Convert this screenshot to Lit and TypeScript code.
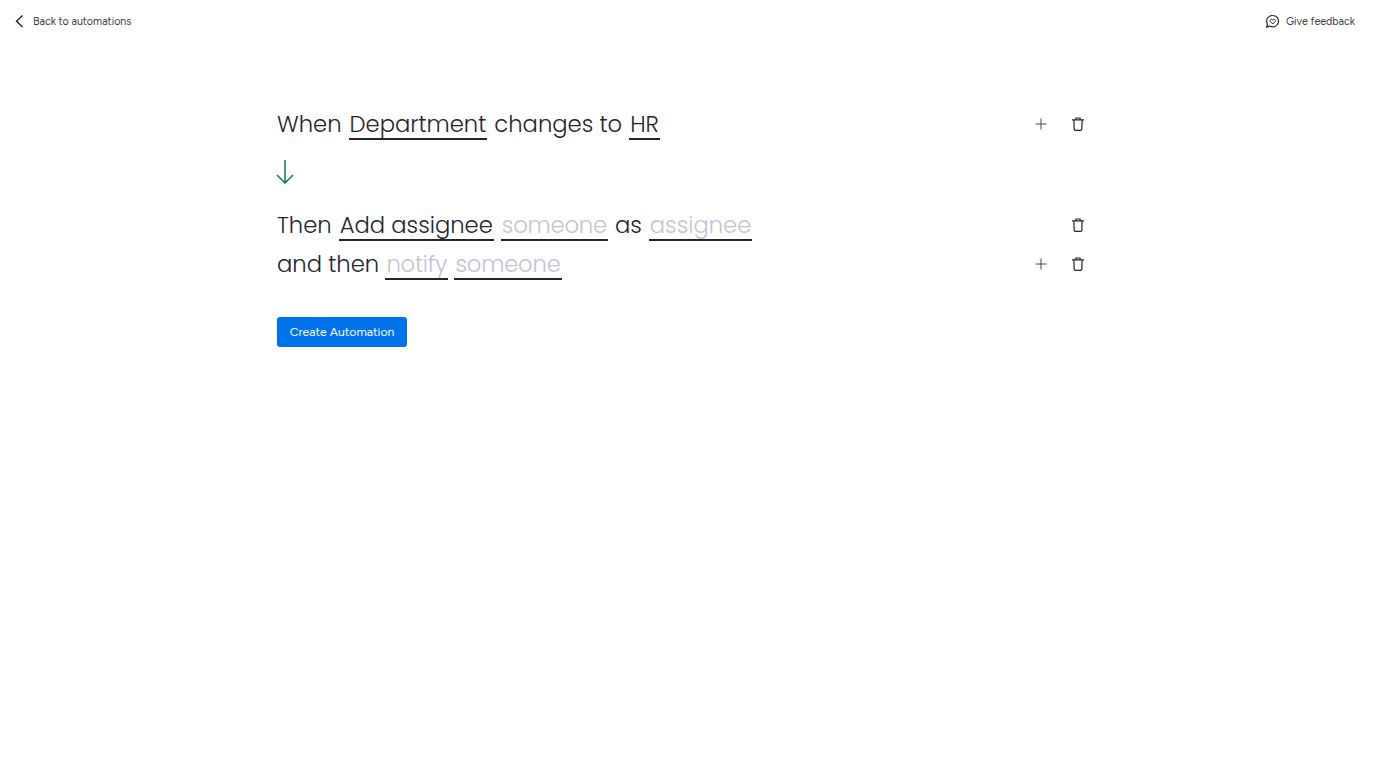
import { LitElement, html, css } from "lit";
import { customElement } from "lit/decorators.js";

const plus = html`<svg class="icon" viewBox="0 0 16 16" width="16" height="16"><path d="M8 2.5v11M2.5 8h11" stroke="#44444f" stroke-width="1" fill="none"/></svg>`;
const trash = html`<svg class="icon" viewBox="0 0 16 16" width="16" height="16"><path d="M2 3.8h12M5.8 3.6V2h4.4v1.6M3.9 4l.3 9.4a1 1 0 0 0 1 .9h5.6a1 1 0 0 0 1-.9l.3-9.4" stroke="#23232b" stroke-width="1.2" fill="none" stroke-linejoin="round"/></svg>`;

@customElement("app-root")
export class AppRoot extends LitElement {
  static styles = css`
    :host { display: block; width: 1380px; height: 768px; background: #fff; font-family: "Figtree", "Lato", "Liberation Sans", sans-serif; color: #24242c; overflow: hidden; }
    .top { display: flex; justify-content: space-between; align-items: center; height: 42px; padding: 0 25px 0 12px; font-size: 10.7px; color: #3b3b44; }
    .link { display: flex; align-items: center; }
    .back { gap: 7px; }
    .fb { gap: 6px; }
    .main { width: 809px; margin: 62px 0 0 277px; font-family: "Poppins", "Inter", sans-serif; font-weight: 300; font-size: 22.7px; }
    .row { display: flex; align-items: center; justify-content: space-between; height: 39px; }
    .sentence { display: flex; gap: 6.3px; white-space: nowrap; line-height: 31px; margin-top: 2px; }
    .sentence.wide { gap: 7px; }
    .tok { border-bottom: 2px solid #24242c; padding: 0 1px; height: 31px; box-sizing: border-box; }
    .muted { color: #c1c4d8; }
    .tight { letter-spacing: -0.2px; }
    .actions { display: flex; gap: 21.5px; justify-content: flex-end; }
    .icon { display: block; }
    .arrow { display: block; margin: 17px 0 21px -2px; }
    .cta { display: block; margin-top: 34px; width: 130px; height: 30px; background: #0073ea; color: #fff; border: 0; border-radius: 3px; font: 400 12.2px "Figtree", "Lato", sans-serif; padding: 0 0 2px; }
  `;
  render() {
    return html`
      <div class="top">
        <div class="link back">
          <svg width="14" height="16" viewBox="0 0 14 16"><path d="M10.5 2.5 4.5 8.2l6 5.8" stroke="#23232b" stroke-width="1.4" fill="none"/></svg>
          <span>Back to automations</span>
        </div>
        <div class="link fb">
          <svg width="15" height="15" viewBox="0 0 15 15" fill="none"><path d="M7.8 1.5a5.7 5.7 0 1 1-2.9 10.6L1.6 13.2l1-2.9A5.7 5.7 0 0 1 7.8 1.5Z" stroke="#23232b" stroke-width="1.2" stroke-linejoin="round"/><path d="M7.8 10 5.2 7.3c-.9-1.4 1.4-2.8 2.6-1.2 1.2-1.6 3.5-.2 2.6 1.2Z" stroke="#23232b" stroke-width="1"/></svg>
          <span>Give feedback</span>
        </div>
      </div>
      <div class="main">
        <div class="row">
          <div class="sentence wide"><span>When</span><span class="tok">Department</span><span>changes to</span><span class="tok">HR</span></div>
          <div class="actions">${plus}${trash}</div>
        </div>
        <svg class="arrow" width="20" height="24" viewBox="0 0 20 24" fill="none"><path d="M10 0v23M2 15l8 8 8-8" stroke="#0a8043" stroke-width="1.5"/></svg>
        <div class="row">
          <div class="sentence wide"><span>Then</span><span class="tok">Add assignee</span><span class="tok muted tight">someone</span><span>as</span><span class="tok muted">assignee</span></div>
          <div class="actions">${trash}</div>
        </div>
        <div class="row">
          <div class="sentence"><span>and then</span><span class="tok muted tight">notify</span><span class="tok muted tight">someone</span></div>
          <div class="actions">${plus}${trash}</div>
        </div>
        <button class="cta">Create Automation</button>
      </div>
    `;
  }
}
